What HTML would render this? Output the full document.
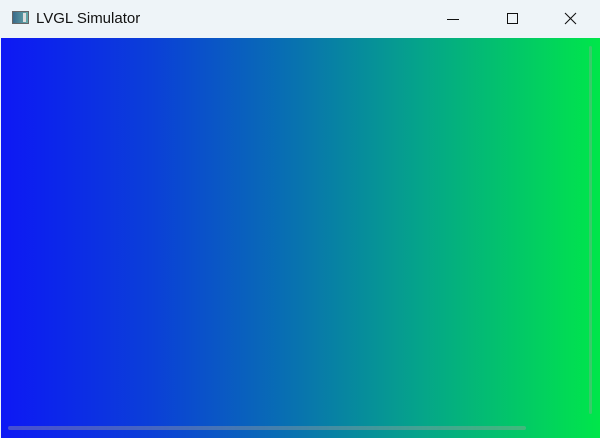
<!DOCTYPE html>
<html><head><meta charset="utf-8"><style>
html,body{margin:0;padding:0;width:600px;height:438px;overflow:hidden;background:#eef4f8;}
.title{position:absolute;left:0;top:0;width:600px;height:38px;background:#eef4f8;}
.t{position:absolute;left:36px;top:10px;font:15px "Liberation Sans",sans-serif;color:#111;}
.ic{position:absolute;left:12px;top:11px;width:17px;height:13px;border:1px solid #666;background:linear-gradient(90deg,#3a6a8a,#6aa);box-sizing:border-box;}
.ic:after{content:"";position:absolute;right:2px;top:1px;width:3px;height:9px;background:#ddd;}
.main{position:absolute;left:1px;top:38px;width:599px;height:400px;background:linear-gradient(90deg,#0d18f5 0%,#0b3fd8 25%,#0874ae 50%,#05a48a 70%,#00e64a 100%);}
.vs{position:absolute;left:589px;top:46px;width:3px;height:368px;background:rgba(160,160,160,0.35);border-radius:2px;}
.hs{position:absolute;left:8px;top:426px;width:518px;height:4px;background:rgba(160,160,160,0.4);border-radius:2px;}
</style></head><body>
<div class="title"><div class="ic"></div><div class="t">LVGL Simulator</div>
<svg style="position:absolute;left:440px;top:8px" width="150" height="22">
<line x1="7" y1="11.5" x2="19" y2="11.5" stroke="#111" stroke-width="1"/>
<rect x="67.5" y="5.5" width="10" height="10" fill="none" stroke="#111" stroke-width="1"/>
<line x1="125" y1="5" x2="136" y2="16" stroke="#111" stroke-width="1.1"/>
<line x1="136" y1="5" x2="125" y2="16" stroke="#111" stroke-width="1.1"/>
</svg></div>
<div class="main"></div>
<div class="vs"></div><div class="hs"></div>
</body></html>
